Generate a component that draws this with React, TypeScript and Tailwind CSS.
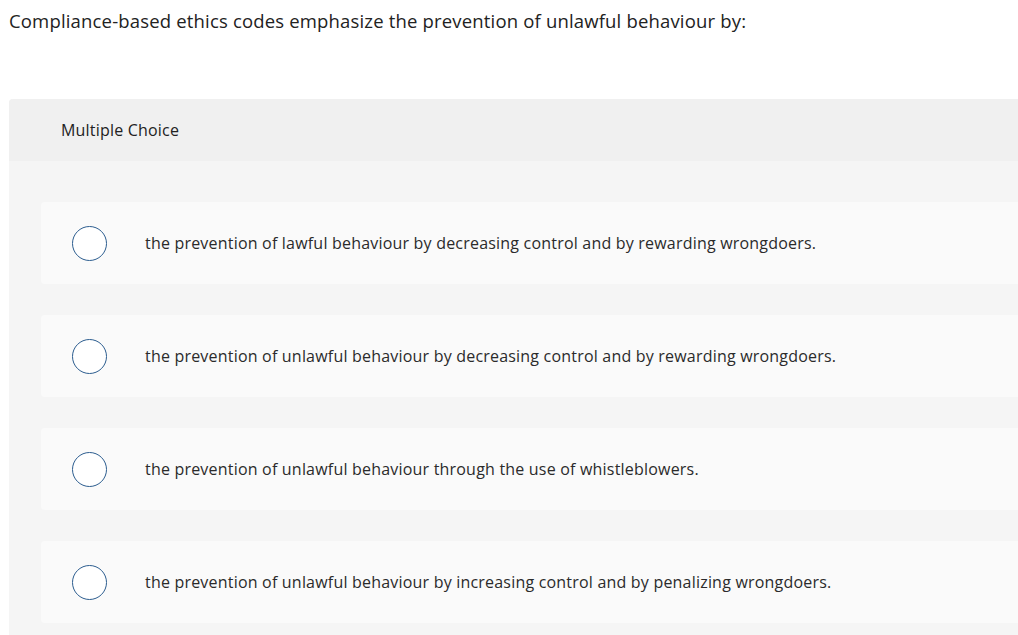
const options = [
  'the prevention of lawful behaviour by decreasing control and by rewarding wrongdoers.',
  'the prevention of unlawful behaviour by decreasing control and by rewarding wrongdoers.',
  'the prevention of unlawful behaviour through the use of whistleblowers.',
  'the prevention of unlawful behaviour by increasing control and by penalizing wrongdoers.',
];

export default function App() {
  return (
    <div className="h-[635px] w-[1018px] overflow-hidden bg-white font-['Open_Sans',sans-serif] text-[#333]">
      <p className="pl-[9px] pt-[9px] text-[18.5px] leading-[24px] tracking-[0.17px] text-[#222]">
        Compliance-based ethics codes emphasize the prevention of unlawful behaviour by:
      </p>

      <div className="ml-[9px] mt-[66px] w-[1040px] rounded-tl-[4px] bg-[#f5f5f5]">
        {/* header */}
        <div className="flex h-[62px] items-center rounded-tl-[4px] bg-[#f0f0f0] pl-[52px] text-[16px] tracking-[0.2px] text-[#222]">
          Multiple Choice
        </div>

        <div className="flex flex-col gap-[31px] pl-[32px] pt-[41px] pb-[20px]">
          {options.map((opt) => (
            <div key={opt} className="flex h-[82px] items-center rounded-[4px] bg-[#fafafa] pl-[31px]">
              <span className="h-[35px] w-[35px] shrink-0 rounded-full border-[1.5px] border-[#2c5d8f] bg-white" />
              <span className="pl-[38px] text-[16px] tracking-[0.2px] text-[#2b2b2b]">{opt}</span>
            </div>
          ))}
        </div>
      </div>
    </div>
  );
}
